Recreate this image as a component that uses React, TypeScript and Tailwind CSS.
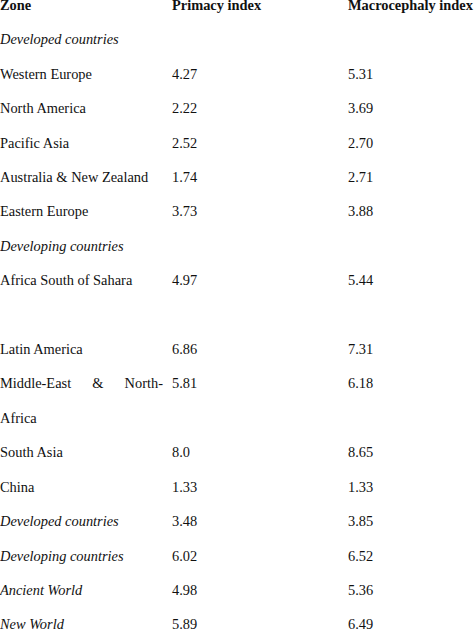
export default function App() {
  const rows: { zone: string; a: string; b: string; italic?: boolean; justify?: boolean }[] = [
    { zone: 'Developed countries', a: '', b: '', italic: true },
    { zone: 'Western Europe', a: '4.27', b: '5.31' },
    { zone: 'North America', a: '2.22', b: '3.69' },
    { zone: 'Pacific Asia', a: '2.52', b: '2.70' },
    { zone: 'Australia & New Zealand', a: '1.74', b: '2.71' },
    { zone: 'Eastern Europe', a: '3.73', b: '3.88' },
    { zone: 'Developing countries', a: '', b: '', italic: true },
    { zone: 'Africa South of Sahara', a: '4.97', b: '5.44' },
    { zone: '\u00a0', a: '', b: '' },
    { zone: 'Latin America', a: '6.86', b: '7.31' },
    { zone: 'Middle-East & North- Africa', a: '5.81', b: '6.18', justify: true },
    { zone: 'South Asia', a: '8.0', b: '8.65' },
    { zone: 'China', a: '1.33', b: '1.33' },
    { zone: 'Developed countries', a: '3.48', b: '3.85', italic: true },
    { zone: 'Developing countries', a: '6.02', b: '6.52', italic: true },
    { zone: 'Ancient World', a: '4.98', b: '5.36', italic: true },
    { zone: 'New World', a: '5.89', b: '6.49', italic: true },
  ];

  return (
    <div className="h-[631px] w-[474px] overflow-hidden bg-white text-[#111] font-['Liberation_Serif',serif] text-[14.4px] leading-[34.4px]">
      <div className="mt-[-12px] grid grid-cols-[172px_176px_1fr]">
        <div className="font-bold">Zone</div>
        <div className="font-bold">Primacy index</div>
        <div className="font-bold whitespace-nowrap">Macrocephaly index</div>
        {rows.map((r, i) => (
          <div key={i} className="contents">
            <div
              className={
                (r.italic ? 'italic ' : '') +
                (r.justify ? 'w-[163px] text-justify [text-align-last:left]' : 'whitespace-nowrap')
              }
            >
              {r.zone}
            </div>
            <div>{r.a}</div>
            <div>{r.b}</div>
          </div>
        ))}
      </div>
    </div>
  );
}
